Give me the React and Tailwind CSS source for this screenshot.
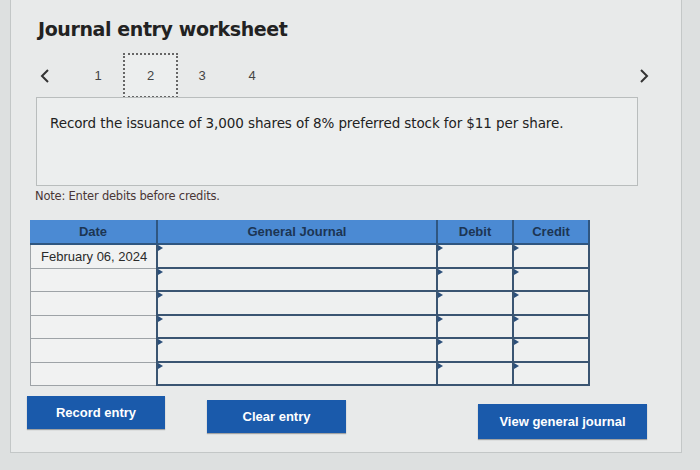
import React from "react";

const Tri = () => (
  <span className="absolute left-0 top-0 w-0 h-0 border-t-[3px] border-b-[3px] border-l-[5px] border-t-transparent border-b-transparent border-l-[#2b4f7a]" />
);

export default function App() {
  const rows = [0, 1, 2, 3, 4, 5];
  return (
    <div className="w-[700px] h-[470px] bg-[#dde0e0] overflow-hidden" style={{ fontFamily: '"Liberation Sans", Arial, sans-serif' }}>
      <div className="ml-[10px] w-[672px] h-[453px] bg-[#e8eaea] border-l border-r border-b border-[#c3c7c7]">
        <div className="pt-[17px] pl-[27px] text-[19px] leading-[24px] font-bold text-[#222]" style={{ fontFamily: '"DejaVu Sans", Verdana, sans-serif', letterSpacing: '-0.4px' }}>
          Journal entry worksheet
        </div>
        <div className="mt-[12px] flex items-center h-[45px] text-[13px] text-[#444]">
          <div className="ml-[22px] w-[24px] flex justify-center">
            <svg width="10" height="14" viewBox="0 0 10 14"><polyline points="8,1 2,7 8,13" fill="none" stroke="#333" strokeWidth="2" /></svg>
          </div>
          <div className="ml-[29px] w-[24px] text-center">1</div>
          <div className="ml-[13px] w-[55px] h-[45px] border-2 border-dotted border-[#666] flex items-center justify-center bg-[#eceeee]">2</div>
          <div className="ml-[12px] w-[24px] text-center">3</div>
          <div className="ml-[26px] w-[24px] text-center">4</div>
          <div className="flex-1" />
          <div className="mr-[25px] w-[24px] flex justify-center">
            <svg width="10" height="14" viewBox="0 0 10 14"><polyline points="2,1 8,7 2,13" fill="none" stroke="#333" strokeWidth="2" /></svg>
          </div>
        </div>
        <div className="relative -mt-[1px] ml-[25px] w-[602px] h-[89px] border border-[#b9bdbd] bg-[#eceeee] pt-[16px] pl-[13px] text-[13.5px] leading-[18px] text-[#222]" style={{ fontFamily: '"DejaVu Sans", Verdana, sans-serif', letterSpacing: '-0.1px' }}>
          Record the issuance of 3,000 shares of 8% preferred stock for $11 per share.
        </div>
        <div className="mt-[2px] ml-[24px] text-[11.5px] leading-[16px] text-[#4a3636]" style={{ fontFamily: '"DejaVu Sans", Verdana, sans-serif', letterSpacing: '-0.2px' }}>
          Note: Enter debits before credits.
        </div>
        <div className="mt-[16px] ml-[19px] w-[560px]">
          <div className="flex h-[25px] bg-[#4b8ad3] text-[13px] font-bold text-[#1c3553] border-b-2 border-[#2f5680]">
            <div className="w-[126px] flex items-center justify-center">Date</div>
            <div className="w-[280px] flex items-center justify-center border-l-2 border-[#2f5680]">General Journal</div>
            <div className="w-[76px] flex items-center justify-center border-l-2 border-[#2f5680]">Debit</div>
            <div className="w-[78px] flex items-center justify-center border-l-2 border-r-2 border-[#2f5680]">Credit</div>
          </div>
          {rows.map((r) => (
            <div key={r} className="flex h-[23.5px]">
              <div className="w-[126px] bg-[#f1f2f2] border-l border-b border-[#9ea3a7] flex items-center pl-[10px] text-[13px] text-[#2a2a2a]">
                {r === 0 ? "February 06, 2024" : ""}
              </div>
              <div className="relative w-[280px] bg-[#eef0f0] border-l-2 border-b-2 border-[#3a5572]"><Tri /></div>
              <div className="relative w-[76px] bg-[#eef0f0] border-l-2 border-b-2 border-[#3a5572]"><Tri /></div>
              <div className="relative w-[78px] bg-[#eef0f0] border-l-2 border-r-2 border-b-2 border-[#3a5572]"><Tri /></div>
            </div>
          ))}
        </div>
        <div className="mt-[10px] ml-[16px] flex items-start text-[13px] font-bold text-white">
          <div className="w-[138px] h-[33px] bg-[#1a5aab] flex items-center justify-center shadow-[0_1px_1px_rgba(0,0,0,0.3)]">Record entry</div>
          <div className="ml-[42px] mt-[4px] w-[139px] h-[33px] bg-[#1a5aab] flex items-center justify-center shadow-[0_1px_1px_rgba(0,0,0,0.3)]">Clear entry</div>
          <div className="ml-[132px] mt-[8px] w-[169px] h-[35px] bg-[#1a5aab] flex items-center justify-center shadow-[0_1px_1px_rgba(0,0,0,0.3)]">View general journal</div>
        </div>
      </div>
    </div>
  );
}
